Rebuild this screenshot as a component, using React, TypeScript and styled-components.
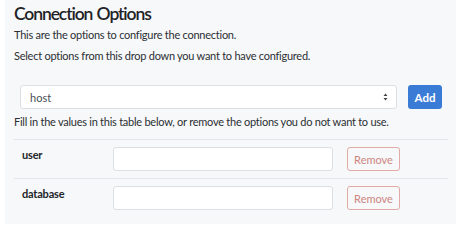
import React from "react";
import styled, { createGlobalStyle } from "styled-components";

const GlobalStyle = createGlobalStyle`
  body {
    margin: 0;
    background: #ffffff;
    font-family: "Lato", "Open Sans", sans-serif;
    color: #212529;
  }
`;

const Panel = styled.div`
  margin-left: 5px;
  width: 451px;
  height: 224px;
  box-sizing: border-box;
  background: #f7f8fa;
  padding: 2px 8px 0 9px;
`;

const Title = styled.h2`
  margin: 0;
  font-size: 17.5px;
  font-weight: 600;
  line-height: 24px;
  letter-spacing: -1.1px;
  word-spacing: 1px;
  color: #1f2326;
`;

const Text = styled.p<{ $gap: number }>`
  margin: ${(p) => p.$gap}px 0 0;
  font-size: 11px;
  line-height: 15px;
  letter-spacing: -0.25px;
  color: #2b2f33;
`;

const AddRow = styled.div`
  display: flex;
  align-items: center;
  gap: 11px;
  margin: 22px 0 0 6px;
`;

const SelectBox = styled.div`
  width: 377px;
  height: 24px;
  box-sizing: border-box;
  background: #fff;
  border: 1px solid #dcdfe3;
  border-radius: 3px;
  display: flex;
  align-items: center;
  padding: 0 8px 0 9px;
  font-size: 11px;
  color: #495057;
`;

const Caret = styled.svg`
  margin-left: auto;
`;

const PrimaryButton = styled.button`
  height: 24px;
  width: 34px;
  border: none;
  border-radius: 3px;
  background: #3a7bd5;
  color: #fff;
  font-family: inherit;
  font-size: 11.5px;
  font-weight: 700;
  padding: 0;
`;

const Table = styled.div`
  margin-top: 10px;
  width: 434px;
`;

const Row = styled.div`
  display: flex;
  align-items: flex-start;
  border-top: 1px solid #e3e5e8;
  padding: 7px 0 7px 8px;
`;

const Label = styled.div`
  width: 91px;
  font-size: 11px;
  font-weight: 700;
  line-height: 15px;
  letter-spacing: -0.2px;
`;

const Field = styled.div`
  width: 220px;
  height: 24px;
  box-sizing: border-box;
  background: #fff;
  border: 1px solid #dcdfe3;
  border-radius: 3px;
`;

const DangerButton = styled.button`
  margin-left: 14px;
  height: 24px;
  width: 53px;
  box-sizing: border-box;
  background: transparent;
  border: 1px solid #e2aaa6;
  border-radius: 3px;
  color: #cd857f;
  font-family: inherit;
  font-size: 11px;
  padding: 0;
`;

const options = ["user", "database"];

export default function App() {
  return (
    <>
      <GlobalStyle />
      <Panel>
        <Title>Connection Options</Title>
        <Text $gap={1}>This are the options to configure the connection.</Text>
        <Text $gap={6}>Select options from this drop down you want to have configured.</Text>
        <AddRow>
          <SelectBox>
            host
            <Caret width="5" height="8" viewBox="0 0 5 8">
              <path d="M0.5 3 L2.5 0.5 L4.5 3 Z M0.5 5 L2.5 7.5 L4.5 5 Z" fill="#444" />
            </Caret>
          </SelectBox>
          <PrimaryButton>Add</PrimaryButton>
        </AddRow>
        <Text $gap={5}>Fill in the values in this table below, or remove the options you do not want to use.</Text>
        <Table>
          {options.map((o) => (
            <Row key={o}>
              <Label>{o}</Label>
              <Field />
              <DangerButton>Remove</DangerButton>
            </Row>
          ))}
        </Table>
      </Panel>
    </>
  );
}
